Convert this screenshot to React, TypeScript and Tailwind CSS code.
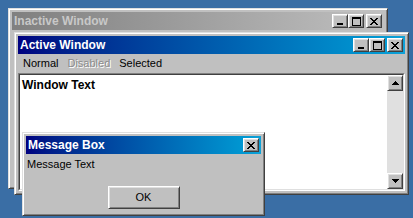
import React from "react";

const raised =
  "border border-t-white border-l-white border-r-[#404040] border-b-[#404040] shadow-[inset_1px_1px_#dfdfdf,inset_-1px_-1px_#808080]";
const frame =
  "border border-t-[#dfdfdf] border-l-[#dfdfdf] border-r-[#404040] border-b-[#404040] shadow-[inset_1px_1px_#fff,inset_-1px_-1px_#808080] bg-[#c0c0c0] p-[3px]";

function Glyph({ kind }: { kind: "min" | "max" | "close" }) {
  if (kind === "min")
    return (
      <svg width="9" height="9" viewBox="0 0 9 9" shapeRendering="crispEdges">
        <rect x="1" y="6" width="6" height="2" fill="#000" />
      </svg>
    );
  if (kind === "max")
    return (
      <svg width="9" height="9" viewBox="0 0 9 9" shapeRendering="crispEdges">
        <rect x="0" y="0" width="9" height="2" fill="#000" />
        <rect x="0" y="0" width="1" height="9" fill="#000" />
        <rect x="8" y="0" width="1" height="9" fill="#000" />
        <rect x="0" y="8" width="9" height="1" fill="#000" />
      </svg>
    );
  return (
    <svg width="8" height="7" viewBox="0 0 8 7" shapeRendering="crispEdges">
      <rect x="0" y="0" width="2" height="1" fill="#000" />
      <rect x="6" y="0" width="2" height="1" fill="#000" />
      <rect x="1" y="1" width="2" height="1" fill="#000" />
      <rect x="5" y="1" width="2" height="1" fill="#000" />
      <rect x="2" y="2" width="4" height="1" fill="#000" />
      <rect x="3" y="3" width="2" height="1" fill="#000" />
      <rect x="2" y="4" width="4" height="1" fill="#000" />
      <rect x="1" y="5" width="2" height="1" fill="#000" />
      <rect x="5" y="5" width="2" height="1" fill="#000" />
      <rect x="0" y="6" width="2" height="1" fill="#000" />
      <rect x="6" y="6" width="2" height="1" fill="#000" />
    </svg>
  );
}

function CapButton({ kind }: { kind: "min" | "max" | "close" }) {
  return (
    <div className={`w-[16px] h-[14px] bg-[#c0c0c0] flex items-center justify-center ${raised}`}>
      <Glyph kind={kind} />
    </div>
  );
}

function TitleBar({
  title,
  active,
  closeOnly,
}: {
  title: string;
  active: boolean;
  closeOnly?: boolean;
}) {
  return (
    <div
      className={`h-[18px] flex items-center pl-[2px] pr-[2px] ${
        active
          ? "bg-gradient-to-r from-[#000080] to-[#10a2d8] text-white"
          : "bg-gradient-to-r from-[#808080] to-[#c0c0c0] text-[#c8c8c8]"
      }`}
    >
      <span className="flex-1 text-[12px] font-bold leading-none">{title}</span>
      {closeOnly ? (
        <CapButton kind="close" />
      ) : (
        <div className="flex items-center">
          <CapButton kind="min" />
          <CapButton kind="max" />
          <div className="w-[2px]" />
          <CapButton kind="close" />
        </div>
      )}
    </div>
  );
}

function Arrow({ up }: { up?: boolean }) {
  return (
    <svg width="7" height="4" viewBox="0 0 7 4" shapeRendering="crispEdges">
      {up ? (
        <>
          <rect x="3" y="0" width="1" height="1" fill="#000" />
          <rect x="2" y="1" width="3" height="1" fill="#000" />
          <rect x="1" y="2" width="5" height="1" fill="#000" />
          <rect x="0" y="3" width="7" height="1" fill="#000" />
        </>
      ) : (
        <>
          <rect x="0" y="0" width="7" height="1" fill="#000" />
          <rect x="1" y="1" width="5" height="1" fill="#000" />
          <rect x="2" y="2" width="3" height="1" fill="#000" />
          <rect x="3" y="3" width="1" height="1" fill="#000" />
        </>
      )}
    </svg>
  );
}

export default function App() {
  return (
    <div className="relative w-[413px] h-[218px] overflow-hidden bg-[#3a6ea5] font-['Liberation_Sans',Arial,sans-serif] text-black">
      {/* inactive window */}
      <div className={`absolute left-[8px] top-[8px] w-[380px] h-[181px] ${frame}`}>
        <TitleBar title="Inactive Window" active={false} />
      </div>

      {/* active window */}
      <div className={`absolute left-[14px] top-[32px] w-[395px] h-[163px] flex flex-col ${frame}`}>
        <TitleBar title="Active Window" active />
        <div className="h-[19px] flex items-center gap-[9px] px-[5px] text-[11px]">
          <span>Normal</span>
          <span className="text-[#8c8c8c] [text-shadow:1px_1px_0_#fff]">Disabled</span>
          <span>Selected</span>
        </div>
        <div className="flex-1 border border-t-[#808080] border-l-[#808080] border-r-white border-b-white">
          <div className="h-full flex border border-t-[#404040] border-l-[#404040] border-r-[#dfdfdf] border-b-[#dfdfdf] bg-white">
            <div className="flex-1 pl-[2px] pt-px text-[12px] font-bold">Window Text</div>
            <div className="w-[16px] flex flex-col bg-[#e0e0e0]">
              <div className={`h-[16px] bg-[#c0c0c0] flex items-center justify-center ${raised}`}>
                <Arrow up />
              </div>
              <div className="flex-1" />
              <div className={`h-[16px] bg-[#c0c0c0] flex items-center justify-center ${raised}`}>
                <Arrow />
              </div>
            </div>
          </div>
        </div>
      </div>

      {/* message box */}
      <div className={`absolute left-[22px] top-[132px] w-[243px] h-[84px] flex flex-col ${frame}`}>
        <TitleBar title="Message Box" active closeOnly />
        <div className="pl-[1px] pt-[2px] text-[11px]">Message Text</div>
        <div className="mt-auto mb-[3px] self-center">
          <div className={`w-[72px] h-[23px] bg-[#c0c0c0] flex items-center justify-center text-[11px] ${raised}`}>
            OK
          </div>
        </div>
      </div>
    </div>
  );
}
